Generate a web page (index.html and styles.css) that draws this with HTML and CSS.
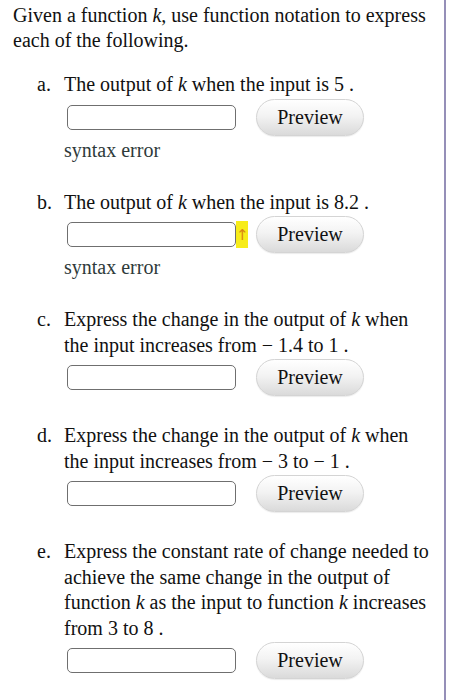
FILE: index.html
```html
<!DOCTYPE html>
<html>
<head>
<meta charset="utf-8">
<link rel="stylesheet" href="styles.css">
</head>
<body>
<div class="page">
  <p class="intro">Given a function <i>k</i>, use function notation to express each of the following.</p>
  <ol class="parts">
    <li class="part">
      <span class="marker">a.</span>
      <div class="body">
        <p class="q">The output of <i>k</i> when the input is 5 .</p>
        <div class="answer">
          <span class="box"></span>
          <button class="preview">Preview</button>
        </div>
        <p class="err">syntax error</p>
      </div>
    </li>
    <li class="part">
      <span class="marker">b.</span>
      <div class="body">
        <p class="q">The output of <i>k</i> when the input is 8.2 .</p>
        <div class="answer">
          <span class="box"></span>
          <span class="flag">&#8593;</span>
          <button class="preview">Preview</button>
        </div>
        <p class="err">syntax error</p>
      </div>
    </li>
    <li class="part">
      <span class="marker">c.</span>
      <div class="body">
        <p class="q">Express the change in the output of <i>k</i> when the input increases from &minus; 1.4 to 1 .</p>
        <div class="answer">
          <span class="box"></span>
          <button class="preview">Preview</button>
        </div>
      </div>
    </li>
    <li class="part">
      <span class="marker">d.</span>
      <div class="body">
        <p class="q">Express the change in the output of <i>k</i> when the input increases from &minus; 3 to &minus; 1 .</p>
        <div class="answer">
          <span class="box"></span>
          <button class="preview">Preview</button>
        </div>
      </div>
    </li>
    <li class="part">
      <span class="marker">e.</span>
      <div class="body">
        <p class="q">Express the constant rate of change needed to achieve the same change in the output of function <i>k</i> as the input to function <i>k</i> increases from 3 to 8 .</p>
        <div class="answer">
          <span class="box"></span>
          <button class="preview">Preview</button>
        </div>
      </div>
    </li>
  </ol>
</div>
</body>
</html>
```
FILE: styles.css
```css
html, body {
  margin: 0;
  padding: 0;
  background: #fff;
}
body {
  font-family: "Liberation Serif", "Times New Roman", serif;
  font-size: 20px;
  color: #111;
}
.page {
  width: 431px;
  min-height: 700px;
  padding: 3px 0 0 13px;
  border-right: 2px solid #958fb8;
  box-sizing: content-box;
}
.intro {
  margin: 0;
  line-height: 25px;
  width: 428px;
}
.parts {
  list-style: none;
  margin: 19px 0 0 0;
  padding: 0;
}
.part {
  display: flex;
  margin-bottom: 27px;
}
.marker {
  width: 27px;
  margin-left: 24px;
  line-height: 25.5px;
  flex: none;
}
.body {
  flex: 1;
}
.q {
  margin: 0;
  line-height: 25.5px;
  width: 370px;
}
.answer {
  display: flex;
  align-items: center;
  margin-top: 1px;
  margin-left: 3px;
  height: 37px;
}
.box {
  width: 167px;
  height: 23px;
  border: 1.5px solid #6f6f6f;
  border-radius: 5px;
  background: #fff;
  flex: none;
}
.flag {
  width: 12px;
  height: 27px;
  background: #f7ec1a;
  color: #d98412;
  font-family: "DejaVu Sans", sans-serif;
  font-size: 15px;
  line-height: 28px;
  text-align: center;
  flex: none;
  margin-right: -12px;
}
.preview {
  margin-left: 20px;
  width: 108px;
  height: 37px;
  border: 1px solid #d4d4d4;
  border-radius: 19px;
  background: linear-gradient(#ffffff, #f3f3f3 45%, #dadada);
  font-family: "Liberation Serif", "Times New Roman", serif;
  font-size: 20px;
  color: #111;
  padding: 0;
  box-shadow: 0 1px 1px rgba(0,0,0,0.08);
}
.err {
  margin: 2px 0 0 0;
  line-height: 25px;
  color: #2e3a3a;
}
```
